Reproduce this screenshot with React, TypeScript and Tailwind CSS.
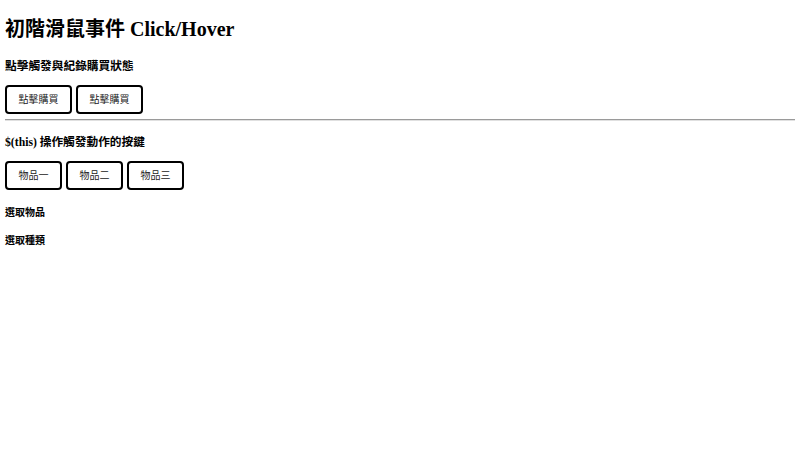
import React from 'react';

const serif = { fontFamily: '"Liberation Serif", "Noto Sans CJK TC", serif' };

function Btn({ label }: { label: string }) {
  return (
    <button className="h-[29px] rounded-[4px] border-2 border-black bg-white px-[11.5px] text-[10px] leading-none text-[#222]">
      {label}
    </button>
  );
}

export default function App() {
  return (
    <div className="min-h-[450px] bg-white px-[5px] text-black" style={serif}>
      <h1 className="pt-[17px] text-[20px] font-bold leading-[24px]">初階滑鼠事件 Click/Hover</h1>
      <h3 className="mt-[19px] text-[11.7px] font-bold leading-[14px]">點擊觸發與紀錄購買狀態</h3>
      <div className="mt-[11px] flex gap-[4px]">
        <Btn label="點擊購買" />
        <Btn label="點擊購買" />
      </div>
      <hr className="mt-[5px] border-t border-b border-t-[#9a9a9a] border-b-[#e0e0e0]" />
      <h3 className="mt-[15px] text-[11.7px] font-bold leading-[14px]">$(this) 操作觸發動作的按鍵</h3>
      <div className="mt-[11px] flex gap-[4px]">
        <Btn label="物品一" />
        <Btn label="物品二" />
        <Btn label="物品三" />
      </div>
      <p className="mt-[17px] text-[10px] font-bold leading-[12px]">選取物品</p>
      <p className="mt-[16px] text-[10px] font-bold leading-[12px]">選取種類</p>
    </div>
  );
}
